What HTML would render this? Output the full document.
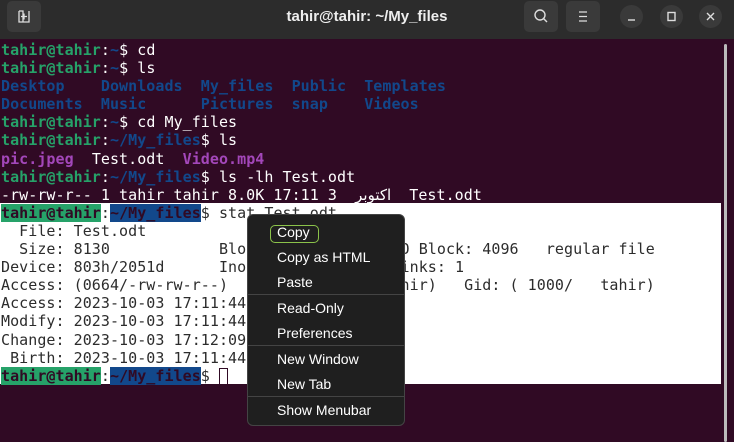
<!DOCTYPE html>
<html><head><meta charset="utf-8"><style>
*{margin:0;padding:0;box-sizing:border-box}
body{width:734px;height:442px;overflow:hidden;background:#300a24;position:relative;font-family:"Liberation Sans",sans-serif}
.tb{position:absolute;left:0;top:0;width:734px;height:39px;background:#2c2c2c}
.title{position:absolute;left:0;right:0;top:8px;text-align:center;color:#eee;font-weight:bold;font-size:15px}
.btn{position:absolute;top:1px;width:34px;height:31px;background:#3a3a3a;border-radius:5px}
.cir{position:absolute;top:5px;width:23px;height:23px;border-radius:50%;background:#3a3a3a}
.term{position:absolute;left:1px;top:41px;font-family:"DejaVu Sans Mono","Liberation Mono",monospace;font-size:15px;line-height:18.1px;color:#fff;letter-spacing:0.05px}
.term div{height:18.1px;white-space:pre}
.g{color:#26a269;font-weight:bold}.b{color:#12488b;font-weight:bold}.p{color:#a347ba;font-weight:bold}
.sel{position:absolute;left:0;top:203px;width:721px;height:181px;background:#fff}
.s{color:#2c2c2c}
.gb{background:#26a269;color:#300a24;font-weight:bold}.bb{background:#12488b;color:#300a24;font-weight:bold}
.menu{position:absolute;left:247px;top:214px;width:158px;height:212px;background:#1f1f1f;border:1px solid #444;border-radius:6px;color:#fff;font-size:14px}
.mi{position:absolute;left:29px}
.sep{position:absolute;left:0;right:0;height:1px;background:#444}
.scroll{position:absolute;left:724px;top:44px;width:3px;height:398px;background:#bbb;border-radius:2px}
</style></head><body>
<div class="tb">
<div class="btn" style="left:7px"><svg width="34" height="31"><path d="M12 10v11h10V10M12 10h4v11M14 15.5h6M17 12.5v6" fill="none" stroke="#ddd" stroke-width="1.3"/></svg></div>
<div class="title">tahir@tahir: ~/My_files</div>
<div class="btn" style="left:524px"><svg width="34" height="31"><circle cx="16" cy="14" r="5" fill="none" stroke="#ddd" stroke-width="1.4"/><path d="M19.5 17.5l3.5 3.5" stroke="#ddd" stroke-width="1.4"/></svg></div>
<div class="btn" style="left:566px"><svg width="34" height="31"><path d="M13 11h8M13 15.5h8M13 20h8" stroke="#ddd" stroke-width="1.3"/></svg></div>
<div class="cir" style="left:620px"><svg width="23" height="23"><path d="M8 15h7" stroke="#ddd" stroke-width="1.4"/></svg></div>
<div class="cir" style="left:660px"><svg width="23" height="23"><rect x="8" y="7.5" width="7" height="8" fill="none" stroke="#ddd" stroke-width="1.4"/></svg></div>
<div class="cir" style="left:699px"><svg width="23" height="23"><path d="M8 8l7 7M15 8l-7 7" stroke="#ddd" stroke-width="1.4"/></svg></div>
</div>
<div class="sel"></div>
<div class="scroll"></div>
<div class="term"><div><span class="g">tahir@tahir</span>:<span class="b">~</span>$ cd</div><div><span class="g">tahir@tahir</span>:<span class="b">~</span>$ ls</div><div><span class="b">Desktop    Downloads  My_files  Public  Templates</span></div><div><span class="b">Documents  Music      Pictures  snap    Videos</span></div><div><span class="g">tahir@tahir</span>:<span class="b">~</span>$ cd My_files</div><div><span class="g">tahir@tahir</span>:<span class="b">~/My_files</span>$ ls</div><div><span class="p">pic.jpeg</span>  Test.odt  <span class="p">Video.mp4</span></div><div><span class="g">tahir@tahir</span>:<span class="b">~/My_files</span>$ ls -lh Test.odt</div><div>-rw-rw-r-- 1 tahir tahir 8.0K 17:11 3  <span style="font-family:'DejaVu Sans',sans-serif">اكتوبر</span>  Test.odt</div><div class="s"><span class="gb">tahir@tahir</span>:<span class="bb">~/My_files</span>$ stat Test.odt</div><div class="s">  File: Test.odt</div><div class="s">  Size: 8130            Blocks: 16         IO Block: 4096   regular file</div><div class="s">Device: 803h/2051d      Inode: 1234567     Links: 1</div><div class="s">Access: (0664/-rw-rw-r--)  Uid: ( 1000/   tahir)   Gid: ( 1000/   tahir)</div><div class="s">Access: 2023-10-03 17:11:44.123456789 +0300</div><div class="s">Modify: 2023-10-03 17:11:44.123456789 +0300</div><div class="s">Change: 2023-10-03 17:12:09.123456789 +0300</div><div class="s"> Birth: 2023-10-03 17:11:44.123456789 +0300</div><div class="s"><span class="gb">tahir@tahir</span>:<span class="bb">~/My_files</span>$ <span style="display:inline-block;width:9px;height:17px;border:1px solid #300a24;vertical-align:-4px"></span></div></div>
<div class="menu">
<div style="position:absolute;left:22px;top:10px;width:49px;height:18px;border:1.5px solid #8bc34a;border-radius:5px"></div>
<div class="mi" style="top:9px">Copy</div>
<div class="mi" style="top:34px">Copy as HTML</div>
<div class="mi" style="top:59px">Paste</div>
<div class="sep" style="top:79px"></div>
<div class="mi" style="top:85px">Read-Only</div>
<div class="mi" style="top:110px">Preferences</div>
<div class="sep" style="top:130px"></div>
<div class="mi" style="top:136px">New Window</div>
<div class="mi" style="top:161px">New Tab</div>
<div class="sep" style="top:181px"></div>
<div class="mi" style="top:187px">Show Menubar</div>
</div>
</body></html>
